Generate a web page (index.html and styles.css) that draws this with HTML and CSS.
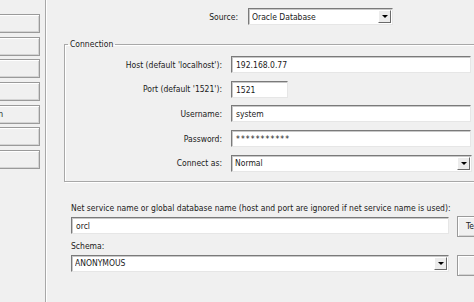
FILE: index.html
```html
<!DOCTYPE html>
<html lang="en">
<head>
  <meta charset="UTF-8" />
  <title>Oracle Connection</title>
  <link rel="stylesheet" href="styles.css">
</head>
<body>

<div class="window">

  <div class="side">
    <button class="side-btn"></button>
    <button class="side-btn"></button>
    <button class="side-btn"></button>
    <button class="side-btn"></button>
    <button class="side-btn">Connection</button>
    <button class="side-btn"></button>
    <button class="side-btn"></button>
  </div>

  <div class="divider"></div>

  <div class="main">

    <div class="source-row">
      <label class="source-label">Source:</label>
      <div class="combo source-combo">
        <span class="combo-text">Oracle Database</span>
        <span class="combo-arrow"></span>
      </div>
    </div>

    <fieldset class="group">
      <legend>Connection</legend>

      <div class="row">
        <label>Host (default 'localhost'):</label>
        <div class="field wide">192.168.0.77</div>
      </div>
      <div class="row">
        <label>Port (default '1521'):</label>
        <div class="field short">1521</div>
      </div>
      <div class="row">
        <label>Username:</label>
        <div class="field wide">system</div>
      </div>
      <div class="row">
        <label>Password:</label>
        <div class="field wide pass">***********</div>
      </div>
      <div class="row">
        <label>Connect as:</label>
        <div class="combo wide-combo">
          <span class="combo-text">Normal</span>
          <span class="combo-arrow"></span>
        </div>
      </div>
    </fieldset>

    <div class="lower">
      <div class="lower-fields">
        <div class="lower-label">Net service name or global database name (host and port are ignored if net service name is used):</div>
        <div class="field full">orcl</div>
        <div class="lower-label">Schema:</div>
        <div class="combo full">
          <span class="combo-text">ANONYMOUS</span>
          <span class="combo-arrow"></span>
        </div>
      </div>
      <div class="lower-buttons">
        <button class="push first">Test</button>
        <button class="push second"></button>
      </div>
    </div>

  </div>
</div>

</body>
</html>
```

FILE: styles.css
```css
html, body {
  margin: 0;
  padding: 0;
  overflow: hidden;
}
body {
  background: #f0f0f0;
  font-family: "DejaVu Sans Condensed", "DejaVu Sans", sans-serif;
  font-size: 8.5px;
  color: #1a1a1a;
  width: 474px;
  height: 302px;
}
.window {
  display: flex;
  height: 302px;
}
.side {
  width: 40px;
  display: flex;
  flex-direction: column;
  align-items: flex-end;
  gap: 3.7px;
  padding-top: 14px;
  flex-shrink: 0;
}
.side-btn {
  width: 90px;
  height: 19px;
  flex-shrink: 0;
  background: #f0f0f0;
  border: 1px solid #9a9a9a;
  box-shadow: inset 1px 1px 0 #ffffff, inset -1px -1px 0 #d4d4d4;
  font: inherit;
  color: #1a1a1a;
  text-align: right;
  padding: 0 36px 0 0;
}
.divider {
  width: 1px;
  margin-left: 5px;
  background: #a8a8a8;
  border-right: 1px solid #ffffff;
  flex-shrink: 0;
}
.main {
  flex: 1;
  padding: 8px 0 0 17px;
  min-width: 0;
}
.source-row {
  display: flex;
  align-items: center;
  height: 17px;
}
.source-label {
  width: 184px;
  text-align: right;
  padding-right: 10px;
  box-sizing: border-box;
}
.combo {
  display: flex;
  align-items: center;
  height: 17px;
  box-sizing: border-box;
  background: #ffffff;
  border: 1px solid;
  border-color: #7a7a7a #e6e6e6 #e6e6e6 #7a7a7a;
  box-shadow: inset 1px 1px 0 #c8c8c8;
  padding-left: 3px;
}
.source-combo {
  width: 145px;
}
.combo-text {
  flex: 1;
  white-space: nowrap;
  overflow: hidden;
}
.combo-arrow {
  position: relative;
  width: 13px;
  height: 13px;
  margin-right: 1px;
  background: #ececec;
  border: 1px solid;
  border-color: #ffffff #6a6a6a #6a6a6a #ffffff;
  box-sizing: border-box;
}
.combo-arrow::after {
  content: "";
  position: absolute;
  left: 3px;
  top: 4px;
  border-left: 3px solid transparent;
  border-right: 3px solid transparent;
  border-top: 3px solid #000000;
}
.group {
  margin: 14px -10px 0 0;
  padding: 7px 0 9px 0;
  border: 1px solid #a8a8a8;
  box-shadow: inset 1px 1px 0 #ffffff, 1px 1px 0 #ffffff;
}
.group legend {
  padding: 0 2px;
  margin-left: 3px;
}
.row {
  display: flex;
  align-items: center;
  height: 17px;
  margin-bottom: 7.7px;
}
.row:last-child {
  margin-bottom: 0;
}
.row label {
  width: 166px;
  text-align: right;
  padding-right: 9px;
  box-sizing: border-box;
  flex-shrink: 0;
}
.field {
  height: 17px;
  box-sizing: border-box;
  background: #ffffff;
  border: 1px solid;
  border-color: #7a7a7a #e6e6e6 #e6e6e6 #7a7a7a;
  box-shadow: inset 1px 1px 0 #c8c8c8;
  padding: 3px 0 0 4px;
  white-space: nowrap;
}
.wide {
  width: 240px;
}
.short {
  width: 57px;
}
.wide-combo {
  width: 241px;
}
.pass {
  letter-spacing: 1.1px;
}
.lower {
  display: flex;
  margin: 20px 0 0 7px;
}
.lower-fields {
  width: 378px;
  display: flex;
  flex-direction: column;
}
.lower-label {
  height: 13px;
  line-height: 13px;
  white-space: nowrap;
  margin-bottom: 2px;
}
.field.full {
  margin-bottom: 6px;
}
.full {
  width: 378px;
}
.lower-buttons {
  margin-left: 8px;
  display: flex;
  flex-direction: column;
  padding-top: 14px;
}
.push {
  width: 60px;
  height: 21px;
  background: #f0f0f0;
  border: 1px solid #9a9a9a;
  box-shadow: inset 1px 1px 0 #ffffff, inset -1px -1px 0 #d4d4d4;
  font: inherit;
  color: #1a1a1a;
  text-align: left;
  padding-left: 8px;
}
.push.second {
  margin-top: 18px;
}
```
